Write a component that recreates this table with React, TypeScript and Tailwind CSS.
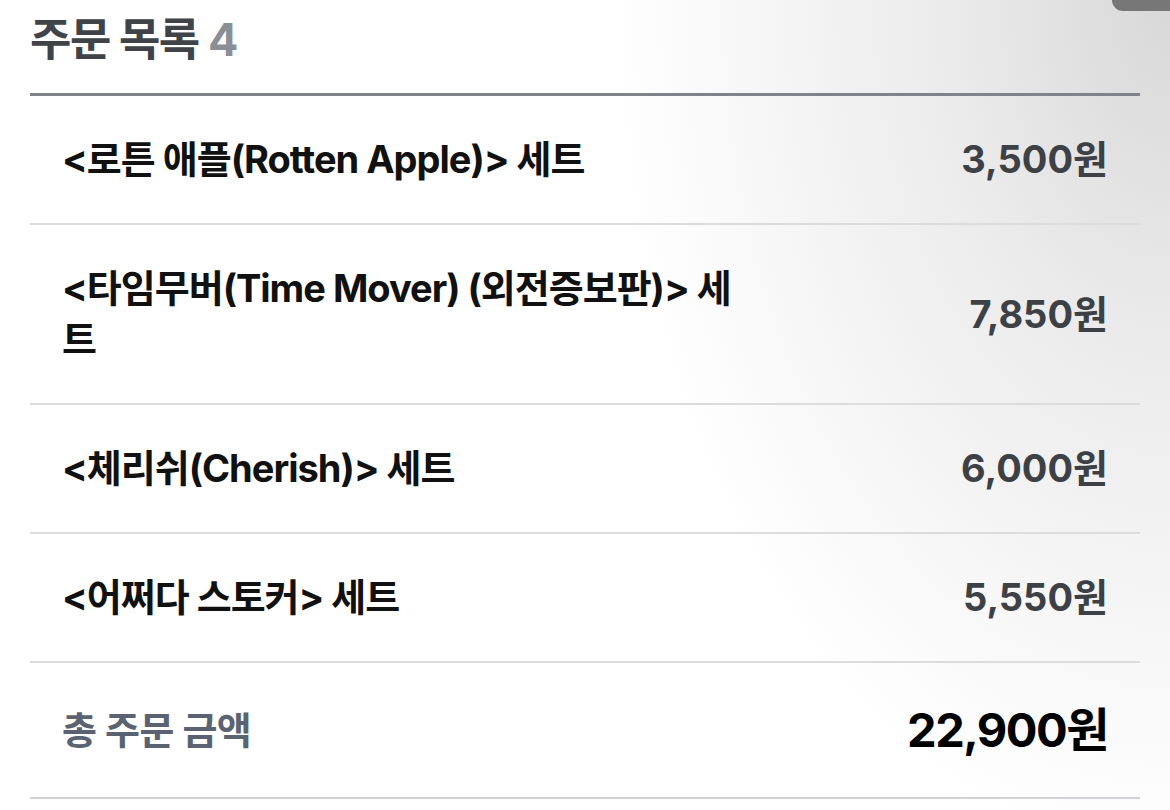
const items = [
  { name: "<로튼 애플(Rotten Apple)> 세트", price: "3,500원" },
  { name: "<타임무버(Time Mover) (외전증보판)> 세트", price: "7,850원" },
  { name: "<체리쉬(Cherish)> 세트", price: "6,000원" },
  { name: "<어쩌다 스토커> 세트", price: "5,550원" },
];

const font = "font-['Inter','Noto_Sans_CJK_KR',sans-serif]";

export default function App() {
  return (
    <div
      className={`relative min-h-[810px] w-full overflow-hidden bg-[radial-gradient(ellipse_560px_860px_at_100%_0%,#d8d8d8_0%,#ebebeb_40%,#ffffff_100%)] ${font}`}
    >
      {/* corner of a floating control, cut off by the top edge */}
      <div className="absolute right-0 top-0 h-[11px] w-[58px] rounded-bl-[40px] bg-[#777777]" />

      <div className="px-[30px]">
        {/* header */}
        <div className="flex h-[96px] items-start border-b-[3px] border-[#7f848a] pt-[10px]">
          <h1 className="text-[45px] font-bold leading-[60px] tracking-[-1.5px] text-[#404347]">
            주문 목록 <span className="text-[#8a8f96]">4</span>
          </h1>
        </div>

        {/* item rows */}
        {items.map((item) => (
          <div
            key={item.name}
            className="flex items-center justify-between border-b-2 border-[#dcdcdc] py-[38px] pl-[32px] pr-[32px]"
          >
            <p className="max-w-[680px] text-[38px] font-bold leading-[51px] tracking-[-1px] text-[#111111]">
              {item.name}
            </p>
            <span className="text-[38px] font-bold leading-[51px] text-[#3d4146]">
              {item.price}
            </span>
          </div>
        ))}

        {/* total */}
        <div className="flex items-center justify-between border-b-2 border-[#d2d2d6] py-[42px] pl-[32px] pr-[32px]">
          <span className="text-[38px] font-bold leading-[50px] tracking-[-0.5px] text-[#5b6372]">
            총 주문 금액
          </span>
          <span className="text-[47px] font-bold leading-[50px] tracking-[-1.5px] text-black">
            22,900원
          </span>
        </div>
      </div>
    </div>
  );
}
